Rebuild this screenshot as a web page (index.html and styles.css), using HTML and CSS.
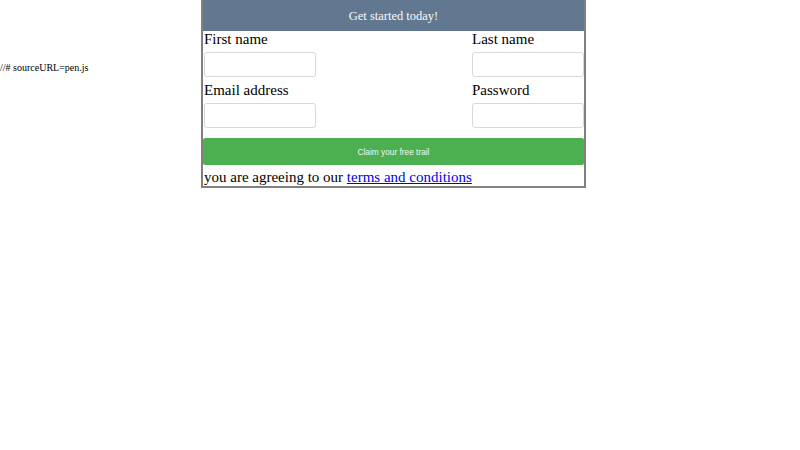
FILE: index.html
```html
<!DOCTYPE html>
<html>
<head>
<meta charset="utf-8">
<link rel="stylesheet" href="styles.css">
</head>
<body>
<div class="page">
  <div class="source">//# sourceURL=pen.js</div>
  <form class="card">
    <div class="card-head">Get started today!</div>
    <div class="fields">
      <div class="field">
        <label class="label">First name</label>
        <input class="input" type="text">
      </div>
      <div class="field">
        <label class="label">Last name</label>
        <input class="input" type="text">
      </div>
      <div class="field">
        <label class="label">Email address</label>
        <input class="input" type="text">
      </div>
      <div class="field">
        <label class="label">Password</label>
        <input class="input" type="password">
      </div>
    </div>
    <button class="cta" type="button">Claim your free trail</button>
    <p class="terms">you are agreeing to our <a href="#" class="terms-link">terms and conditions</a></p>
  </form>
</div>
</body>
</html>
```
FILE: styles.css
```css
html, body {
  margin: 0;
  padding: 0;
  background: #ffffff;
}

body {
  font-family: "Liberation Serif", "Times New Roman", serif;
  color: #000;
}

.page {
  display: flex;
  align-items: flex-start;
}

.source {
  width: 201px;
  flex: none;
  padding-top: 62px;
  font-size: 10px;
  line-height: 11px;
}

.card {
  width: 381px;
  flex: none;
  margin: 0;
  border: 2px solid #808080;
  border-top: 0;
  display: flex;
  flex-direction: column;
}

.card-head {
  height: 31px;
  background: #627891;
  color: #f8f8f8;
  font-size: 12.5px;
  line-height: 33px;
  text-align: center;
}

.fields {
  display: grid;
  grid-template-columns: auto auto;
  justify-content: space-between;
  row-gap: 5px;
  padding-left: 1px;
}

.field {
  display: flex;
  flex-direction: column;
}

.label {
  font-size: 15px;
  line-height: 17px;
  height: 17px;
}

.input {
  box-sizing: border-box;
  width: 112px;
  height: 25px;
  margin: 4px 0 0;
  border: 1px solid #d8d8d8;
  border-radius: 3px;
  background: #fff;
  padding: 0 4px;
}

.cta {
  margin: 10px 0 0;
  height: 27px;
  border: 0;
  border-radius: 2px;
  background: #4caf50;
  color: #f1f8f1;
  font-family: "Liberation Sans", Arial, sans-serif;
  font-size: 8.3px;
  padding: 0;
}

.terms {
  margin: 4px 0 0 1px;
  font-size: 15px;
  line-height: 17px;
  height: 17px;
}

.terms-link {
  color: #0000ee;
  text-decoration: underline;
}
```
